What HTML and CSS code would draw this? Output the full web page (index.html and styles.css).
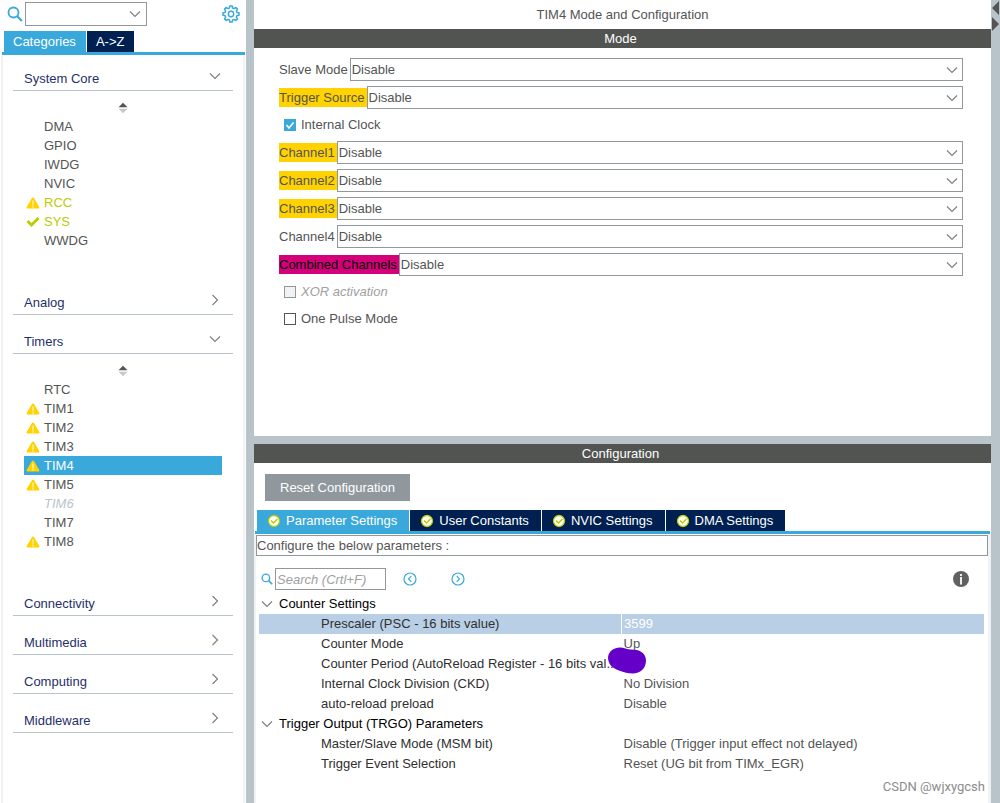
FILE: index.html
```
<!DOCTYPE html>
<html lang="en">
<head>
    <meta charset="UTF-8">
    <meta name="viewport" content="width=device-width, initial-scale=1.0">
    <title>TIM4 Mode and Configuration</title>
    <link rel="stylesheet" href="styles.css">
</head>
<body>
    <!-- shared icons -->
    <svg class="sprite" aria-hidden="true">
        <symbol id="i-search" viewBox="0 0 16 16">
            <circle cx="6.5" cy="6.5" r="5" fill="none" stroke="currentColor" stroke-width="1.8"/>
            <path d="M10.2 10.2L15 15" stroke="currentColor" stroke-width="2.2"/>
        </symbol>
        <symbol id="i-gear" viewBox="0 0 18 18">
            <path d="M7.8 1h2.4l.4 2 1.5.6 1.8-1.1 1.6 1.6-1.1 1.8.6 1.5 2 .4v2.4l-2 .4-.6 1.5 1.1 1.8-1.6 1.6-1.8-1.1-1.5.6-.4 2H7.8l-.4-2-1.5-.6-1.8 1.1-1.6-1.6 1.1-1.8-.6-1.5-2-.4V7.800l2-.4.6-1.500-1.100-1.800 1.600-1.600 1.800 1.100 1.500-.6z" fill="none" stroke="currentColor" stroke-width="1.5" stroke-linejoin="round"/>
            <circle cx="9" cy="9" r="2.7" fill="none" stroke="currentColor" stroke-width="1.4"/>
        </symbol>
        <symbol id="i-down" viewBox="0 0 16 16">
            <path d="M3 5.5l5 5 5-5" fill="none" stroke="#808080" stroke-width="1.2"/>
        </symbol>
        <symbol id="i-right" viewBox="0 0 16 16">
            <path d="M5.500 3l5 5-5 5" fill="none" stroke="#808080" stroke-width="1.2"/>
        </symbol>
        <symbol id="i-sort" viewBox="0 0 10 12">
            <path d="M.5 5.300L5 .8l4.500 4.500z" fill="#545454"/>
            <path d="M.5 6.700L5 11.200l4.500-4.500z" fill="#c8c8c8"/>
        </symbol>
        <symbol id="i-warn" viewBox="0 0 14 12">
            <path d="M7 .5c.5 0 .8.3 1 .6l5.300 9c.4.8 0 1.400-.8 1.400h-11c-.8 0-1.200-.6-.8-1.400l5.300-9c.2-.3.5-.6 1-.6z" fill="#ffd200"/>
            <path d="M7 3.500v5M7 9.200v1.400" stroke="#fff" stroke-width="1"/>
        </symbol>
        <symbol id="i-check" viewBox="0 0 14 12">
            <path d="M1.500 5l4 4 7-7" fill="none" stroke="#bbcc01" stroke-width="2.8"/>
        </symbol>
        <symbol id="i-ok" viewBox="0 0 14 14">
            <circle cx="7" cy="7" r="5.5" fill="#fff" stroke="#bbcc01" stroke-width="1.3"/>
            <path d="M4 6.500l2.500 2.500 4-4" fill="none" stroke="#bbcc01" stroke-width="1.5"/>
        </symbol>
        <symbol id="i-prev" viewBox="0 0 14 14">
            <circle cx="7" cy="7" r="6" fill="none" stroke="currentColor" stroke-width="1.2"/>
            <path d="M8.300 4.200L5.500 7l2.800 2.800" fill="none" stroke="currentColor" stroke-width="1.2"/>
        </symbol>
        <symbol id="i-next" viewBox="0 0 14 14">
            <circle cx="7" cy="7" r="6" fill="none" stroke="currentColor" stroke-width="1.2"/>
            <path d="M5.700 4.200L8.500 7l-2.800 2.800" fill="none" stroke="currentColor" stroke-width="1.2"/>
        </symbol>
        <symbol id="i-info" viewBox="0 0 16 16">
            <circle cx="8" cy="8" r="8" fill="#616161"/>
            <path d="M8 3v2M8 6v7.500" stroke="#fff" stroke-width="1.8"/>
        </symbol>
    </svg>

    <aside class="sidebar">
        <div class="finder">
            <svg class="icon16"><use href="#i-search"/></svg>
            <select class="combo" aria-label="Search peripheral"><option></option></select>
            <button class="icon-btn gear" aria-label="Settings"><svg><use href="#i-gear"/></svg></button>
        </div>
        <div class="tabs side-tabs">
            <button class="tab active">Categories</button>
            <button class="tab">A-&gt;Z</button>
        </div>
        <nav class="categories">
            <button class="category">System Core<svg class="icon16"><use href="#i-down"/></svg></button>
            <div class="group">
                <button class="icon-btn sorter" aria-label="Sort"><svg><use href="#i-sort"/></svg></button>
                <ul>
                    <li><span class="mark"></span>DMA</li>
                    <li><span class="mark"></span>GPIO</li>
                    <li><span class="mark"></span>IWDG</li>
                    <li><span class="mark"></span>NVIC</li>
                    <li class="used"><svg class="mark"><use href="#i-warn"/></svg>RCC</li>
                    <li class="used"><svg class="mark"><use href="#i-check"/></svg>SYS</li>
                    <li><span class="mark"></span>WWDG</li>
                </ul>
            </div>
            <button class="category">Analog<svg class="icon16"><use href="#i-right"/></svg></button>
            <button class="category">Timers<svg class="icon16"><use href="#i-down"/></svg></button>
            <div class="group">
                <button class="icon-btn sorter" aria-label="Sort"><svg><use href="#i-sort"/></svg></button>
                <ul>
                    <li><span class="mark"></span>RTC</li>
                    <li><svg class="mark"><use href="#i-warn"/></svg>TIM1</li>
                    <li><svg class="mark"><use href="#i-warn"/></svg>TIM2</li>
                    <li><svg class="mark"><use href="#i-warn"/></svg>TIM3</li>
                    <li class="selected"><svg class="mark"><use href="#i-warn"/></svg>TIM4</li>
                    <li><svg class="mark"><use href="#i-warn"/></svg>TIM5</li>
                    <li class="off"><span class="mark"></span>TIM6</li>
                    <li><span class="mark"></span>TIM7</li>
                    <li><svg class="mark"><use href="#i-warn"/></svg>TIM8</li>
                </ul>
            </div>
            <button class="category">Connectivity<svg class="icon16"><use href="#i-right"/></svg></button>
            <button class="category">Multimedia<svg class="icon16"><use href="#i-right"/></svg></button>
            <button class="category">Computing<svg class="icon16"><use href="#i-right"/></svg></button>
            <button class="category">Middleware<svg class="icon16"><use href="#i-right"/></svg></button>
        </nav>
    </aside>

    <main class="main-content">
        <section class="mode">
            <h1>TIM4 Mode and Configuration</h1>
            <h2>Mode</h2>
            <form class="mode-form">
                <div class="field">
                    <label for="slave">Slave Mode</label>
                    <select class="combo" id="slave"><option>Disable</option></select>
                </div>
                <div class="field">
                    <label class="warn" for="trigger">Trigger Source</label>
                    <select class="combo" id="trigger"><option>Disable</option></select>
                </div>
                <label class="check"><input type="checkbox" checked>Internal Clock</label>
                <div class="field">
                    <label class="warn" for="ch1">Channel1</label>
                    <select class="combo" id="ch1"><option>Disable</option></select>
                </div>
                <div class="field">
                    <label class="warn" for="ch2">Channel2</label>
                    <select class="combo" id="ch2"><option>Disable</option></select>
                </div>
                <div class="field">
                    <label class="warn" for="ch3">Channel3</label>
                    <select class="combo" id="ch3"><option>Disable</option></select>
                </div>
                <div class="field">
                    <label for="ch4">Channel4</label>
                    <select class="combo" id="ch4"><option>Disable</option></select>
                </div>
                <div class="field">
                    <label class="conflict" for="combined">Combined Channels</label>
                    <select class="combo" id="combined"><option>Disable</option></select>
                </div>
                <label class="check off"><input type="checkbox" disabled>XOR activation</label>
                <label class="check"><input type="checkbox">One Pulse Mode</label>
            </form>
        </section>

        <section class="config">
            <h2>Configuration</h2>
            <button class="reset">Reset Configuration</button>
            <div class="tabs config-tabs">
                <button class="tab active"><svg><use href="#i-ok"/></svg>Parameter Settings</button>
                <button class="tab"><svg><use href="#i-ok"/></svg>User Constants</button>
                <button class="tab"><svg><use href="#i-ok"/></svg>NVIC Settings</button>
                <button class="tab"><svg><use href="#i-ok"/></svg>DMA Settings</button>
            </div>
            <div class="panel">
                <p class="hint">Configure the below parameters :</p>
                <div class="search-row">
                    <svg class="icon12"><use href="#i-search"/></svg>
                    <input type="text" placeholder="Search (Crtl+F)" aria-label="Search parameters">
                    <button class="icon-btn step" aria-label="Previous"><svg><use href="#i-prev"/></svg></button>
                    <button class="icon-btn step" aria-label="Next"><svg><use href="#i-next"/></svg></button>
                    <button class="icon-btn info" aria-label="Information"><svg><use href="#i-info"/></svg></button>
                </div>
                <table class="params">
                    <tbody>
                        <tr><th colspan="2"><svg class="icon16"><use href="#i-down"/></svg>Counter Settings</th></tr>
                        <tr class="selected"><td>Prescaler (PSC - 16 bits value)</td><td>3599</td></tr>
                        <tr><td>Counter Mode</td><td>Up</td></tr>
                        <tr>
                            <td>Counter Period (AutoReload Register - 16 bits val...</td>
                            <td class="hidden-value">
                                <svg class="blot" viewBox="0 0 38 28"><path d="M0 10C1 4 6 .5 12 .5c4 0 7 2 11 2 8 0 15 3 15 11 0 8-6 13-13 13-5 0-9-1-14-3C4 21 0 17 0 10z" fill="#6400c8"/></svg>
                            </td>
                        </tr>
                        <tr><td>Internal Clock Division (CKD)</td><td>No Division</td></tr>
                        <tr><td>auto-reload preload</td><td>Disable</td></tr>
                    </tbody>
                    <tbody>
                        <tr><th colspan="2"><svg class="icon16"><use href="#i-down"/></svg>Trigger Output (TRGO) Parameters</th></tr>
                        <tr><td>Master/Slave Mode (MSM bit)</td><td>Disable (Trigger input effect not delayed)</td></tr>
                        <tr><td>Trigger Event Selection</td><td>Reset (UG bit from TIMx_EGR)</td></tr>
                    </tbody>
                </table>
                <p class="credit">CSDN @wjxygcsh</p>
            </div>
        </section>
    </main>

    <div class="edge">
        <svg viewBox="0 0 9 32"><path d="M8 1v14L1 8zM1 17v14l7-7z" fill="#545454"/></svg>
    </div>
</body>
</html>
```

FILE: styles.css
```
* {
    margin: 0;
    padding: 0;
    box-sizing: border-box;
}

body {
    display: flex;
    min-height: 100vh;
    background-color: white;
    color: #545454;
    font-family: "Liberation Sans", Arial, sans-serif;
    font-size: 13px;
    line-height: 19px;
}

button, input, select {
    font: inherit;
    color: inherit;
    border: none;
    border-radius: 0;
    background: none;
}

svg {
    display: block;
    flex: none;
}

.sprite {
    position: absolute;
    width: 0;
    height: 0;
}

.icon16 {
    width: 16px;
    height: 16px;
}

.icon12 {
    width: 12px;
    height: 12px;
}

.icon-btn {
    display: block;
    color: #39a9dc;
    cursor: pointer;
}

.icon-btn svg {
    width: 100%;
    height: 100%;
}

.combo {
    appearance: none;
    height: 23px;
    padding: 0 20px 0 1px;
    border: 1px solid #90989e;
    background: white url("data:image/svg+xml,%3Csvg xmlns='http://www.w3.org/2000/svg' width='12' height='8'%3E%3Cpath d='M1 1.5l5 5 5-5' fill='none' stroke='%23808080' stroke-width='1.2'/%3E%3C/svg%3E") no-repeat right 4px center;
}

/* sidebar */
.sidebar {
    flex: 0 0 246px;
    padding: 0 1px;
}

.finder {
    display: flex;
    align-items: center;
    padding: 2px 5px 5px 6px;
    color: #39a9dc;
}

.finder .combo {
    width: 122px;
    height: 24px;
    margin-left: 2px;
    background-position: right 5px center;
}

.gear {
    width: 18px;
    height: 18px;
    margin-left: auto;
}

.tabs {
    display: flex;
    gap: 1px;
    border-bottom: 3px solid #39a9dc;
}

.tab {
    display: flex;
    align-items: center;
    height: 21px;
    padding: 0 10px 0 9px;
    background-color: #002052;
    color: white;
    cursor: pointer;
}

.tab.active {
    background-color: #39a9dc;
}

.side-tabs {
    margin-left: 1px;
    padding-left: 2px;
}

.categories {
    min-height: calc(100vh - 55px);
    padding: 2px 10px 0;
    border: solid #f0f2f3;
    border-width: 0 2px;
}

.category {
    display: flex;
    justify-content: space-between;
    align-items: center;
    width: 100%;
    height: 34px;
    margin-bottom: 5px;
    padding: 10px 10px 0 11px;
    border-bottom: 1px solid #b9c4ca;
    color: #1f2f6b;
    text-align: left;
    cursor: pointer;
}

.category .icon16 {
    margin-bottom: 6px;
}

/* pulled up by the gap under the heading */
.group {
    margin-top: -5px;
    padding: 11px 0 31px;
}

.sorter {
    width: 10px;
    height: 12px;
    margin: 0 auto;
}

.group ul {
    margin: 3px 11px 0;
    list-style: none;
}

.group li {
    display: flex;
    align-items: center;
    height: 19px;
    padding-left: 2px;
}

.mark {
    width: 14px;
    height: 12px;
    margin-right: 4px;
}

.group .used {
    color: #bbcc01;
}

.group .off {
    color: #b9c4ca;
    font-style: italic;
}

.group .selected {
    background-color: #39a9dc;
    color: white;
}

/* right part */
.main-content {
    display: flex;
    flex: 1;
    flex-direction: column;
    min-width: 0;
    border-left: 8px solid #b9c4ca;
}

h1 {
    font-size: 13px;
    font-weight: normal;
    line-height: 29px;
    text-align: center;
}

h2 {
    padding-right: 4px;
    background-color: #525452;
    color: white;
    font-size: 13px;
    font-weight: normal;
    line-height: 19px;
    text-align: center;
}

.mode {
    padding-bottom: 106px;
    border-bottom: 8px solid #b9c4ca;
}

.mode-form {
    display: flex;
    flex-direction: column;
    gap: 5px;
    padding: 10px 28px 0 25px;
}

.field {
    display: flex;
    align-items: center;
}

.field label {
    padding-right: 2px;
    white-space: nowrap;
}

.field .combo {
    flex: 1;
}

.warn {
    background-color: #ffd200;
}

.conflict {
    background-color: #d4007a;
    color: black;
}

.check {
    display: flex;
    align-items: center;
    gap: 5px;
    height: 22px;
    padding-left: 5px;
    line-height: 20px;
}

.check input {
    appearance: none;
    width: 12px;
    height: 12px;
    border: 1px solid #545454;
}

.check input:checked {
    border-color: #39a9dc;
    background: #39a9dc url("data:image/svg+xml,%3Csvg xmlns='http://www.w3.org/2000/svg' width='10' height='10'%3E%3Cpath d='M1.5 5l2.5 3 4.5-5.5' fill='none' stroke='white' stroke-width='1.6'/%3E%3C/svg%3E") center no-repeat;
}

.check input:disabled {
    border-color: #90989e;
    background-color: #f0f2f3;
}

.check.off {
    color: #a0a0a0;
    font-style: italic;
}

.config {
    display: flex;
    flex: 1;
    flex-direction: column;
}

.reset {
    align-self: flex-start;
    height: 27px;
    margin: 11px 11px 9px;
    padding: 0 15px;
    background-color: #90989e;
    color: white;
    cursor: pointer;
}

.config-tabs {
    margin: 0 1px;
    padding-left: 2px;
}

.config-tabs .tab {
    padding: 0 12px 0 10px;
}

.config-tabs svg {
    width: 14px;
    height: 14px;
    margin-right: 5px;
}

.panel {
    flex: 1;
    padding-top: 1px;
    border: solid #f0f2f3;
    border-width: 0 3px 0 2px;
}

.hint {
    border: 1px solid #90989e;
}

.search-row {
    display: flex;
    align-items: center;
    padding: 12px 19px 4px 5px;
    color: #39a9dc;
}

.search-row input {
    width: 111px;
    height: 22px;
    margin: 0 17px 0 2px;
    padding: 0 1px;
    border: 1px solid #90989e;
    color: #545454;
}

.search-row input::placeholder {
    color: #a0a0a0;
    font-style: italic;
}

.step {
    width: 14px;
    height: 14px;
    margin-right: 34px;
}

.info {
    width: 16px;
    height: 16px;
    margin-left: auto;
}

.params {
    width: calc(100% - 7px);
    margin-left: 3px;
    border-collapse: collapse;
    table-layout: fixed;
}

.params tr {
    height: 20px;
}

.params th {
    display: flex;
    align-items: center;
    gap: 4px;
    height: 20px;
    padding-bottom: 1px;
    color: black;
    font-weight: normal;
}

.params td {
    padding: 0 0 1px 2px;
    white-space: nowrap;
}

.params td:first-child {
    padding-left: 62px;
    color: #303030;
}

.params .selected td {
    background-color: #b8cfe6;
}

.params .selected td:last-child {
    border-left: 1px solid white;
    color: white;
}

.params .hidden-value {
    position: relative;
}

.blot {
    position: absolute;
    top: -7px;
    left: -14px;
    width: 38px;
    height: 28px;
}

.credit {
    margin: 3px 3px 0 0;
    color: #8c8c8c;
    font-family: Roboto, sans-serif;
    text-align: right;
}

.edge {
    flex: 0 0 9px;
    background-color: #b9c4ca;
}
```
